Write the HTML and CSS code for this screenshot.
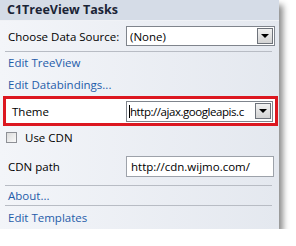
FILE: index.html
```html
<!DOCTYPE html>
<html lang="en">
<head>
    <meta charset="UTF-8">
    <meta name="viewport" content="width=device-width, initial-scale=1.0">
    <title>C1TreeView Tasks</title>
    <link rel="stylesheet" href="styles.css">
</head>
<body>
    <div class="panel">
        <div class="panel-header">C1TreeView Tasks</div>

        <!-- Data source -->
        <div class="row row-source">
            <span class="row-label">Choose Data Source:</span>
            <div class="combo">
                <span class="combo-text">(None)</span>
                <span class="combo-btn"><span class="arrow"></span></span>
            </div>
        </div>
        <div class="sep"></div>

        <div class="link-row"><a href="#">Edit TreeView</a></div>
        <div class="link-row"><a href="#">Edit Databindings...</a></div>

        <!-- Theme (highlighted) -->
        <div class="row row-theme">
            <span class="row-label">Theme</span>
            <div class="combo">
                <span class="combo-text"><span class="caret"></span>http://ajax.googleapis.c</span>
                <span class="combo-btn"><span class="arrow"></span></span>
            </div>
        </div>

        <div class="check-row">
            <span class="check-box"></span>
            <span>Use CDN</span>
        </div>

        <div class="row row-cdn">
            <span class="row-label">CDN path</span>
            <div class="textbox">http://cdn.wijmo.com/</div>
        </div>
        <div class="sep"></div>

        <div class="link-row link-about"><a href="#">About...</a></div>
        <div class="sep"></div>
        <div class="link-row link-last"><a href="#">Edit Templates</a></div>
    </div>
</body>
</html>
```

FILE: styles.css
```css
* {
    box-sizing: border-box;
}
body {
    margin: 0;
    background: #fff;
    font-family: "Open Sans", Arial, sans-serif;
    font-size: 11.5px;
    color: #000;
}
.panel {
    width: 279px;
    height: 229px;
    background: linear-gradient(to right, #f3f5f9, #e4e8ef);
    box-shadow: 4px 5px 6px rgba(0, 0, 0, 0.45);
}
.panel-header {
    height: 21px;
    line-height: 20px;
    padding-left: 7px;
    background: #d5dce7;
    border-bottom: 1px solid #f0f2f6;
    font-size: 12.5px;
    font-weight: bold;
    color: #1b2436;
}
.row {
    display: flex;
    align-items: center;
}
.row-label {
    width: 126px;
    padding-left: 8px;
    flex-shrink: 0;
}
.row-source {
    height: 30px;
}
.sep {
    height: 1px;
    margin: 0 7px 0 5px;
    background: #b8bcc4;
}
.link-row {
    height: 22px;
    line-height: 22px;
    padding-left: 8px;
}
.link-row a {
    color: #1f5ca9;
    text-decoration: none;
}
.link-about {
    height: 19px;
    line-height: 19px;
}
.link-last {
    height: 23px;
    line-height: 23px;
}
.combo {
    display: flex;
    align-items: center;
    width: 149px;
    height: 20px;
    border: 1px solid #7f848c;
    background: #fff;
    padding: 0 1px 0 3px;
}
.combo-text {
    flex: 1;
    overflow: hidden;
    white-space: nowrap;
}
.caret {
    display: inline-block;
    width: 1px;
    height: 13px;
    background: #000;
    vertical-align: -2px;
}
.combo-btn {
    display: flex;
    align-items: center;
    justify-content: center;
    width: 16px;
    height: 16px;
    margin-left: 2px;
    border: 1px solid #6e737b;
    background: linear-gradient(#f1f1f1, #d3d3d3);
}
.arrow {
    width: 0;
    height: 0;
    border-left: 4px solid transparent;
    border-right: 4px solid transparent;
    border-top: 4px solid #000;
}
.row-theme {
    height: 30px;
    margin: 0 1px 0 3px;
    border: 3px solid #dc1720;
    background: #fff;
}
.row-theme .row-label {
    width: 120px;
    padding-left: 6px;
}
.row-theme .combo {
    width: 147px;
    height: 21px;
    padding-left: 2px;
}
.row-theme .combo-text {
    letter-spacing: -0.45px;
}
.check-row {
    display: flex;
    align-items: center;
    height: 22px;
    padding-left: 6px;
}
.check-box {
    width: 11px;
    height: 11px;
    margin-right: 8px;
    border: 1px solid #8e9096;
    background: linear-gradient(135deg, #dcdcdc, #fafafa);
}
.row-cdn {
    height: 37px;
}
.textbox {
    width: 148px;
    height: 21px;
    line-height: 19px;
    padding-left: 4px;
    border: 1px solid #9da2aa;
    background: #fff;
}
```
